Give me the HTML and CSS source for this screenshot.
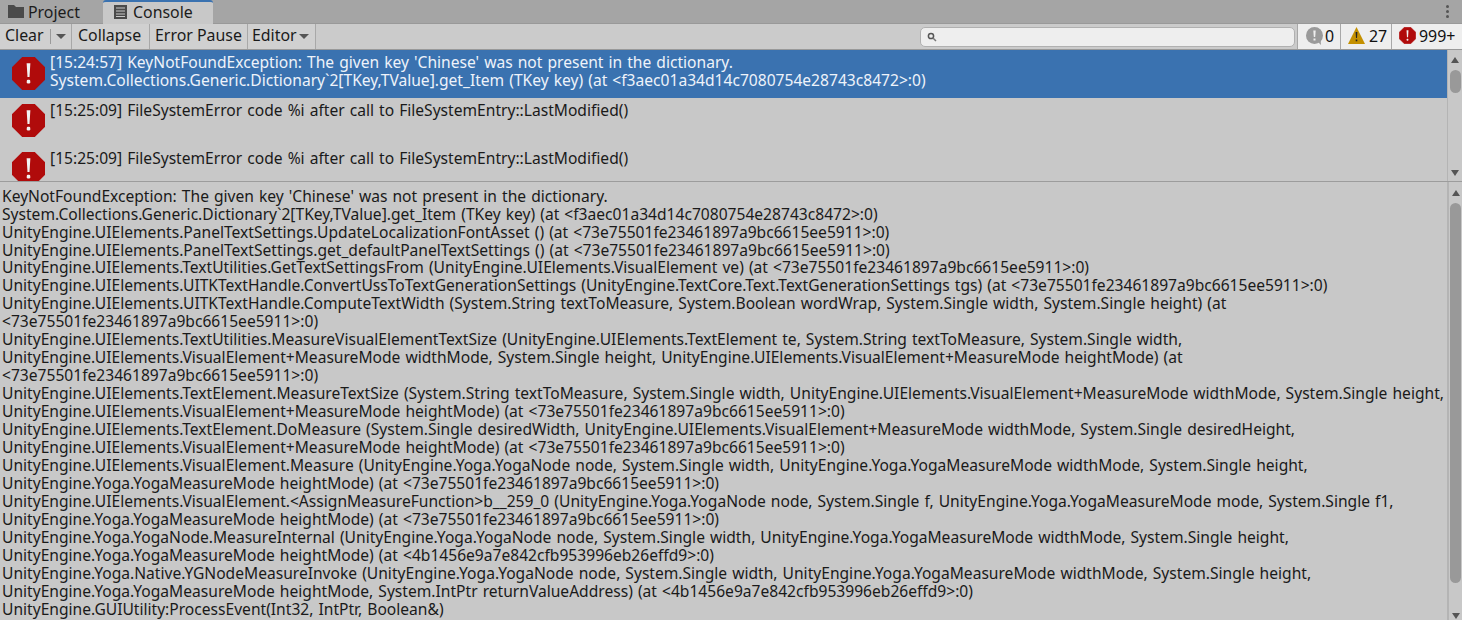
FILE: index.html
```html
<!DOCTYPE html>
<html lang="en">
<head>
<meta charset="utf-8">
<title>Console</title>
<link rel="stylesheet" href="styles.css">
</head>
<body>
<svg class="defs" width="0" height="0" aria-hidden="true">
  <symbol id="err" viewBox="0 0 32 32">
    <path d="M10 .5H22L31.500 10V22L22 31.500H10L.5 22V10Z" fill="#b00b0b" stroke="#b00b0b" stroke-linejoin="round"/>
    <path d="M14.200 6H17.800L17 19.500H15Z" fill="#f2f2f2"/>
    <rect x="14.300" y="22" width="3.400" height="3.800" rx="1.200" fill="#f2f2f2"/>
  </symbol>
</svg>
<div class="tabbar">
  <div class="tab">
    <svg class="tab-icon" viewBox="0 0 16 13"><path d="M0 0H6L8 2H16V13H0Z" fill="#4a4a4a"/></svg>
    <span>Project</span>
  </div>
  <div class="tab tab-active">
    <svg class="tab-icon" viewBox="0 0 13 14"><rect width="13" height="14" fill="#4a4a4a"/><path d="M2 3H11M2 6H11M2 9H11M2 11.5H11" stroke="#c8c8c8" stroke-width="1"/></svg>
    <span>Console</span>
  </div>
  <div class="tab-spacer"></div>
  <div class="kebab"><i></i><i></i><i></i></div>
</div>
<div class="toolbar">
  <div class="tool tool-clear">Clear<span class="sep"></span><span class="caret"></span></div>
  <div class="tool tool-collapse">Collapse</div>
  <div class="tool tool-pause">Error Pause</div>
  <div class="tool tool-editor">Editor<span class="caret"></span></div>
  <div class="toolbar-fill"></div>
  <div class="search">
    <svg class="search-icon" viewBox="0 0 10 10"><circle cx="4" cy="4" r="2.6" fill="none" stroke="#555" stroke-width="1.5"/><path d="M6 6L9 9" stroke="#777" stroke-width="1.5"/></svg>
  </div>
  <div class="counter counter-info">
    <svg class="c-icon-i" viewBox="0 0 17 18"><circle cx="8.500" cy="8.500" r="8.500" fill="#9a9a9a"/><path d="M11 14L15 18L14.500 12Z" fill="#9a9a9a"/><path d="M7.300 3.500H9.700L9.200 10H7.800Z" fill="#eee"/><rect x="7.500" y="11.500" width="2" height="2" fill="#eee"/></svg>
    <span>0</span>
  </div>
  <div class="counter counter-warn">
    <svg class="c-icon" viewBox="0 0 17 17"><path d="M8.500 0L17 17H0Z" fill="#c49000"/><path d="M7.600 5H9.400L9 11H8Z" fill="#222"/><rect x="7.700" y="12.500" width="1.600" height="1.800" fill="#222"/></svg>
    <span>27</span>
  </div>
  <div class="counter counter-err">
    <svg class="c-icon"><use href="#err"/></svg>
    <span>999+</span>
  </div>
</div>
<div class="log-pane">
  <div class="log-list">
    <div class="row row-selected">
      <svg class="row-icon"><use href="#err"/></svg>
      <div class="row-text">
        <div>[15:24:57] KeyNotFoundException: The given key 'Chinese' was not present in the dictionary.</div>
        <div>System.Collections.Generic.Dictionary`2[TKey,TValue].get_Item (TKey key) (at &lt;f3aec01a34d14c7080754e28743c8472&gt;:0)</div>
      </div>
    </div>
    <div class="row">
      <svg class="row-icon"><use href="#err"/></svg>
      <div class="row-text"><div>[15:25:09] FileSystemError code %i after call to FileSystemEntry::LastModified()</div></div>
    </div>
    <div class="row">
      <svg class="row-icon"><use href="#err"/></svg>
      <div class="row-text"><div>[15:25:09] FileSystemError code %i after call to FileSystemEntry::LastModified()</div></div>
    </div>
  </div>
  <div class="scrollbar scrollbar-log">
    <span class="arrow-up"></span>
    <div class="thumb-track"><div class="thumb thumb-top"></div></div>
    <span class="arrow-down"></span>
  </div>
</div>
<div class="detail-pane">
  <div class="detail-text">
    <div>KeyNotFoundException: The given key 'Chinese' was not present in the dictionary.</div>
    <div>System.Collections.Generic.Dictionary`2[TKey,TValue].get_Item (TKey key) (at &lt;f3aec01a34d14c7080754e28743c8472&gt;:0)</div>
    <div>UnityEngine.UIElements.PanelTextSettings.UpdateLocalizationFontAsset () (at &lt;73e75501fe23461897a9bc6615ee5911&gt;:0)</div>
    <div>UnityEngine.UIElements.PanelTextSettings.get_defaultPanelTextSettings () (at &lt;73e75501fe23461897a9bc6615ee5911&gt;:0)</div>
    <div>UnityEngine.UIElements.TextUtilities.GetTextSettingsFrom (UnityEngine.UIElements.VisualElement ve) (at &lt;73e75501fe23461897a9bc6615ee5911&gt;:0)</div>
    <div>UnityEngine.UIElements.UITKTextHandle.ConvertUssToTextGenerationSettings (UnityEngine.TextCore.Text.TextGenerationSettings tgs) (at &lt;73e75501fe23461897a9bc6615ee5911&gt;:0)</div>
    <div>UnityEngine.UIElements.UITKTextHandle.ComputeTextWidth (System.String textToMeasure, System.Boolean wordWrap, System.Single width, System.Single height) (at</div>
    <div>&lt;73e75501fe23461897a9bc6615ee5911&gt;:0)</div>
    <div>UnityEngine.UIElements.TextUtilities.MeasureVisualElementTextSize (UnityEngine.UIElements.TextElement te, System.String textToMeasure, System.Single width,</div>
    <div>UnityEngine.UIElements.VisualElement+MeasureMode widthMode, System.Single height, UnityEngine.UIElements.VisualElement+MeasureMode heightMode) (at</div>
    <div>&lt;73e75501fe23461897a9bc6615ee5911&gt;:0)</div>
    <div>UnityEngine.UIElements.TextElement.MeasureTextSize (System.String textToMeasure, System.Single width, UnityEngine.UIElements.VisualElement+MeasureMode widthMode, System.Single height,</div>
    <div>UnityEngine.UIElements.VisualElement+MeasureMode heightMode) (at &lt;73e75501fe23461897a9bc6615ee5911&gt;:0)</div>
    <div>UnityEngine.UIElements.TextElement.DoMeasure (System.Single desiredWidth, UnityEngine.UIElements.VisualElement+MeasureMode widthMode, System.Single desiredHeight,</div>
    <div>UnityEngine.UIElements.VisualElement+MeasureMode heightMode) (at &lt;73e75501fe23461897a9bc6615ee5911&gt;:0)</div>
    <div>UnityEngine.UIElements.VisualElement.Measure (UnityEngine.Yoga.YogaNode node, System.Single width, UnityEngine.Yoga.YogaMeasureMode widthMode, System.Single height,</div>
    <div>UnityEngine.Yoga.YogaMeasureMode heightMode) (at &lt;73e75501fe23461897a9bc6615ee5911&gt;:0)</div>
    <div>UnityEngine.UIElements.VisualElement.&lt;AssignMeasureFunction&gt;b__259_0 (UnityEngine.Yoga.YogaNode node, System.Single f, UnityEngine.Yoga.YogaMeasureMode mode, System.Single f1,</div>
    <div>UnityEngine.Yoga.YogaMeasureMode heightMode) (at &lt;73e75501fe23461897a9bc6615ee5911&gt;:0)</div>
    <div>UnityEngine.Yoga.YogaNode.MeasureInternal (UnityEngine.Yoga.YogaNode node, System.Single width, UnityEngine.Yoga.YogaMeasureMode widthMode, System.Single height,</div>
    <div>UnityEngine.Yoga.YogaMeasureMode heightMode) (at &lt;4b1456e9a7e842cfb953996eb26effd9&gt;:0)</div>
    <div>UnityEngine.Yoga.Native.YGNodeMeasureInvoke (UnityEngine.Yoga.YogaNode node, System.Single width, UnityEngine.Yoga.YogaMeasureMode widthMode, System.Single height,</div>
    <div>UnityEngine.Yoga.YogaMeasureMode heightMode, System.IntPtr returnValueAddress) (at &lt;4b1456e9a7e842cfb953996eb26effd9&gt;:0)</div>
    <div>UnityEngine.GUIUtility:ProcessEvent(Int32, IntPtr, Boolean&amp;)</div>
  </div>
  <div class="scrollbar scrollbar-detail">
    <span class="arrow-up"></span>
    <div class="thumb-track"><div class="thumb thumb-long"></div></div>
    <span class="arrow-down"></span>
  </div>
</div>
</body>
</html>
```
FILE: styles.css
```css
* { box-sizing: border-box; }
html, body { margin: 0; height: 620px; overflow: hidden; }
body {
  display: flex;
  flex-direction: column;
  background: #c8c8c8;
  color: #111;
  font-family: "Noto Sans", "Open Sans", sans-serif;
  font-size: 15.9px;
}
.defs { position: absolute; }

.tabbar {
  display: flex;
  height: 24px;
  flex: none;
  background: #a5a5a5;
  border-bottom: 1px solid #999;
}
.tab {
  display: flex;
  align-items: center;
  gap: 4px;
  width: 103px;
  padding-left: 8px;
  color: #1c1c1c;
}
.tab-icon { width: 16px; height: 13px; }
.tab-active {
  width: 110px;
  height: 24px;
  padding-left: 11px;
  padding-bottom: 2px;
  background: #c8c8c8;
  border-top: 2px solid #3a72b0;
  border-radius: 3px 3px 0 0;
  gap: 6px;
}
.tab-active .tab-icon { width: 13px; height: 14px; }
.tab-spacer { flex: 1; }
.kebab {
  display: flex;
  flex-direction: column;
  gap: 2px;
  width: 16px;
  padding-top: 5px;
  margin-right: 7px;
  align-items: center;
}
.kebab i { width: 3px; height: 3px; border-radius: 50%; background: #555; }

.toolbar {
  display: flex;
  height: 26px;
  flex: none;
  background: #cbcbcb;
  border-bottom: 1px solid #999;
  align-items: stretch;
}
.tool {
  display: flex;
  align-items: center;
  padding: 0 0 3px 6px;
  border-right: 1px solid #a8a8a8;
  background: #d0d0d0;
  white-space: nowrap;
  color: #1a1a1a;
}
.tool-clear { padding-left: 5px; width: 72px; }
.sep { width: 1px; height: 15px; background: #9a9a9a; margin: 2px 5px 0 6px; }
.caret {
  width: 0;
  height: 0;
  border-left: 5px solid transparent;
  border-right: 5px solid transparent;
  border-top: 5px solid #555;
  margin-top: 3px;
}
.tool-collapse { width: 78px; }
.tool-pause { width: 98px; padding-left: 5px; }
.tool-editor { width: 68px; gap: 2px; padding-left: 4px; }
.toolbar-fill { flex: 1; }
.search {
  display: flex;
  align-items: center;
  width: 375px;
  height: 20px;
  margin-top: 3px;
  margin-right: 2px;
  padding-left: 6px;
  background: #eee;
  border: 1px solid #b0b0b0;
  border-radius: 5px;
}
.search-icon { width: 10px; height: 10px; }
.counter {
  display: flex;
  align-items: center;
  flex: none;
  background: #eee;
  border-left: 1px solid #a8a8a8;
  white-space: nowrap;
  color: #111;
  font-size: 15.9px;
  padding-bottom: 2px;
}
.counter-info { width: 43px; padding-left: 8px; gap: 2px; }
.counter-warn { width: 51px; padding-left: 7px; gap: 4px; }
.counter-err { width: 71px; padding-left: 7px; gap: 3px; }
.c-icon { width: 17px; height: 17px; }
.c-icon-i { width: 17px; height: 18px; }

.log-pane {
  display: flex;
  height: 132px;
  flex: none;
  overflow: hidden;
  border-bottom: 1px solid #9c9c9c;
}
.log-list { flex: 1; overflow: hidden; }
.row {
  display: flex;
  height: 48px;
  padding-left: 12px;
  gap: 5px;
  line-height: 18px;
  color: #1a1a1a;
  font-size: 15.6px;
  word-spacing: 1px;
}
.row-selected { background: #3a72b0; color: #eef3fa; }
.row-icon { width: 33px; height: 33px; margin-top: 6px; flex: none; }
.row-selected .row-icon { margin-top: 7px; }
.row-text { padding-top: 3px; white-space: nowrap; }

.scrollbar {
  display: flex;
  flex-direction: column;
  align-items: center;
  width: 15px;
  flex: none;
  background: #c8c8c8;
  border-left: 1px solid #b4b4b4;
}
.scrollbar-log { padding: 7px 0 5px; }
.scrollbar-detail { border-left: 2px solid #b4b4b4; padding: 8px 0 1px; }
.arrow-up, .arrow-down {
  width: 0;
  height: 0;
  border-left: 4px solid transparent;
  border-right: 4px solid transparent;
  flex: none;
}
.arrow-up { border-bottom: 6px solid #555; }
.arrow-down { border-top: 6px solid #555; }
.thumb-track { flex: 1; width: 100%; padding: 7px 1px 0 2px; }
.scrollbar-detail .thumb-track { padding-left: 1px; }
.thumb { width: 100%; background: #999; border-radius: 6px; }
.thumb-top { height: 23px; }
.thumb-long { height: 380px; }

.detail-pane { display: flex; flex: 1; min-height: 0; overflow: hidden; }
.detail-text {
  flex: 1;
  padding: 5.65px 0 0 2px;
  line-height: 17.96px;
  white-space: nowrap;
  overflow: hidden;
  color: #1a1a1a;
  font-size: 15.6px;
  word-spacing: 1px;
}
```
